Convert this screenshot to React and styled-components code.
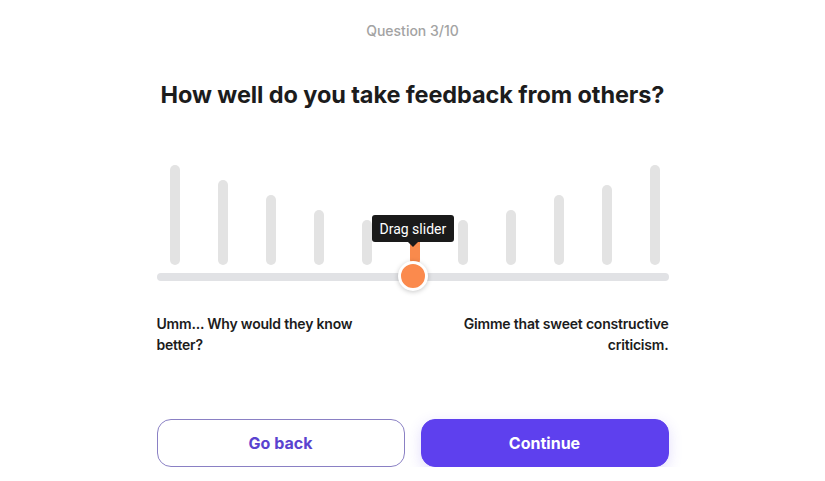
import styled, { createGlobalStyle } from "styled-components";

const GlobalStyle = createGlobalStyle`
  body {
    margin: 0;
    background: #ffffff;
    font-family: Inter, "Noto Sans", sans-serif;
  }
`;

// heights of the bars above the track, left to right
const bars = [100, 85, 70, 55, 45, 45, 45, 55, 70, 80, 100];
const activeIndex = 5;

const App = () => {
  return (
    <Page>
      <GlobalStyle />
      <Counter>Question 3/10</Counter>
      <Title>How well do you take feedback from others?</Title>

      <Slider>
        <Bars>
          {bars.map((h, i) => (
            <Bar key={i} $active={i === activeIndex} style={{ height: h }} />
          ))}
        </Bars>
        <Track />
        <Handle />
        <Tooltip>Drag slider</Tooltip>
      </Slider>

      <Labels>
        <Label>Umm... Why would they know better?</Label>
        <Label $right>Gimme that sweet constructive criticism.</Label>
      </Labels>

      <Buttons>
        <Button>Go back</Button>
        <Button $primary>Continue</Button>
      </Buttons>
    </Page>
  );
};

const Page = styled.div`
  width: 512px;
  margin: 0 auto;
  padding-top: 22px;
  display: flex;
  flex-direction: column;
`;

const Counter = styled.div`
  text-align: center;
  font-size: 14px;
  font-weight: 500;
  color: #a3a3a3;
  line-height: 18px;
`;

const Title = styled.h1`
  margin: 40px 0 0;
  text-align: center;
  font-size: 23.5px;
  font-weight: 700;
  color: #1c1c1c;
  line-height: 30px;
  letter-spacing: -0.1px;
`;

const Slider = styled.div`
  position: relative;
  margin-top: 55px;
`;

const Bars = styled.div`
  height: 100px;
  display: flex;
  align-items: flex-end;
  justify-content: space-between;
  padding: 0 9px 0 13px;
`;

const Bar = styled.div`
  width: 10px;
  border-radius: 5px;
  background: ${(p) => (p.$active ? "#f98a4c" : "#e3e3e3")};
`;

const Track = styled.div`
  margin-top: 8px;
  height: 8px;
  border-radius: 4px;
  background: #e1e2e5;
`;

const Handle = styled.div`
  position: absolute;
  left: 241px;
  top: 96px;
  width: 24px;
  height: 24px;
  border-radius: 50%;
  background: #fb8a4d;
  border: 3px solid #ffffff;
  box-shadow: 0 1px 5px rgba(0, 0, 0, 0.22);
`;

const Tooltip = styled.div`
  position: absolute;
  left: 215px;
  top: 50px;
  height: 27px;
  padding: 0 8px;
  display: flex;
  align-items: center;
  background: #1a1a1a;
  color: #ffffff;
  border-radius: 3px;
  font-family: Roboto, sans-serif;
  font-size: 14px;
  white-space: nowrap;

  &::after {
    content: "";
    position: absolute;
    left: 50%;
    bottom: -5px;
    margin-left: -5px;
    border-left: 5px solid transparent;
    border-right: 5px solid transparent;
    border-top: 5px solid #1a1a1a;
  }
`;

const Labels = styled.div`
  margin-top: 32px;
  display: flex;
  justify-content: space-between;
`;

const Label = styled.div`
  width: 215px;
  font-size: 14px;
  font-weight: 600;
  color: #1c1c1c;
  line-height: 21px;
  letter-spacing: -0.2px;
  text-align: ${(p) => (p.$right ? "right" : "left")};
`;

const Buttons = styled.div`
  margin-top: 64px;
  display: grid;
  grid-template-columns: 1fr 1fr;
  gap: 16px;
`;

const Button = styled.button`
  height: 48px;
  border-radius: 14px;
  font-family: Inter, sans-serif;
  font-size: 16px;
  font-weight: 700;
  cursor: pointer;
  border: 1px solid ${(p) => (p.$primary ? "#5e40ee" : "#8a80c4")};
  background: ${(p) => (p.$primary ? "#5e40ee" : "#ffffff")};
  color: ${(p) => (p.$primary ? "#ffffff" : "#5a43cf")};
  box-shadow: ${(p) => (p.$primary ? "0 4px 14px rgba(94, 64, 238, 0.18)" : "none")};
`;

export default App;
